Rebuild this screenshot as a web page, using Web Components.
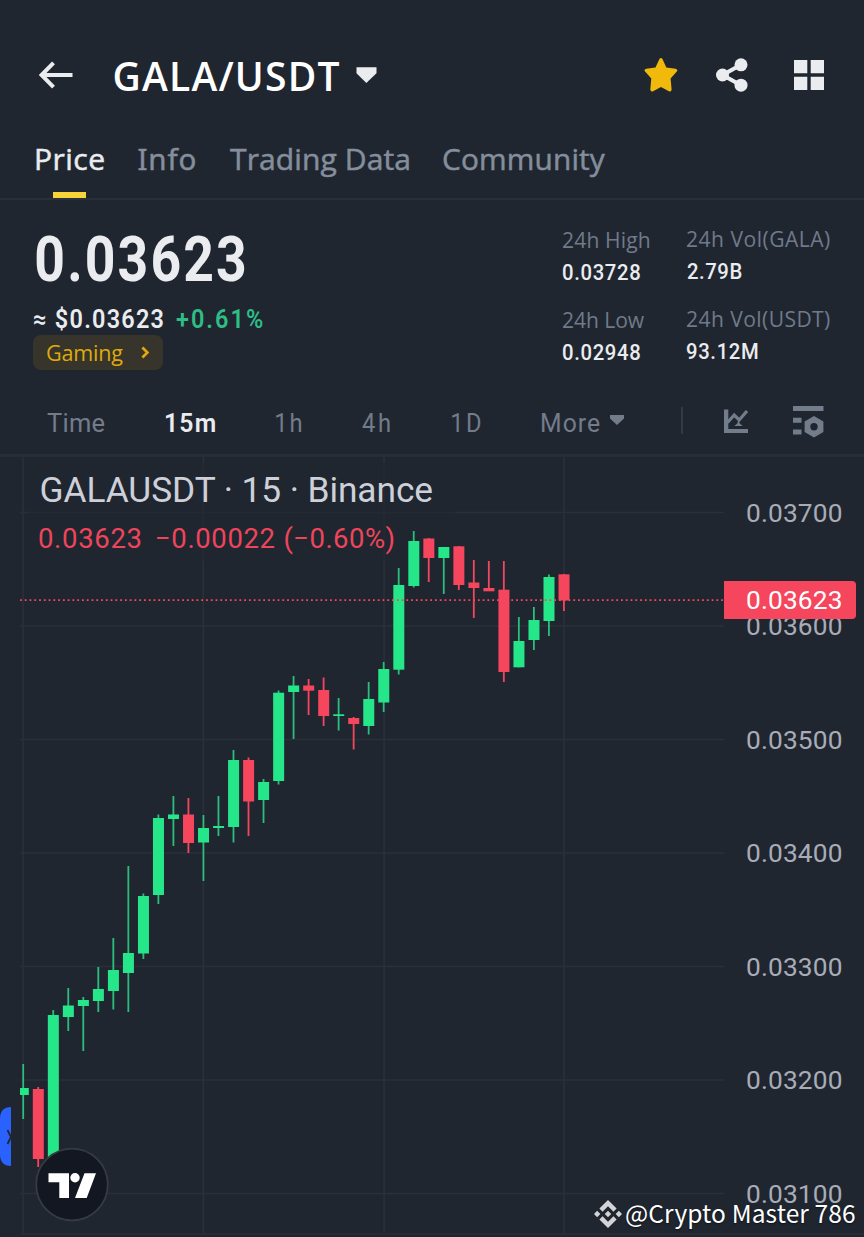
<!DOCTYPE html>
<html lang="en">
<head>
<meta charset="utf-8">
<title>GALA/USDT</title>
<style>
    body {
        margin: 0;
        background: #202630;
        color: #eaecef;
        font-family: Roboto, "Liberation Sans", sans-serif;
    }
</style>
</head>
<body>
<trade-page></trade-page>

<script>
const SANS = '"Open Sans", "Noto Sans", sans-serif';
const measure = document.createElement("canvas").getContext("2d");

// shared base: every element renders its own markup in an open shadow root
class BaseElement extends HTMLElement {
    constructor() {
        super();
        this.attachShadow({ mode: "open" });
    }

    connectedCallback() {
        const template = document.createElement("template");
        template.innerHTML = this.render();
        this.shadowRoot.replaceChildren(template.content.cloneNode(true));
    }
}

// a single line of text tracked to an exact ink width
class FitText extends HTMLElement {
    constructor() {
        super();
        this.attachShadow({ mode: "open" }).innerHTML = `
            <style>
                :host { display: block; flex: none; }
                span { display: block; width: max-content; white-space: pre; transform-origin: 0 50%; }
            </style>
            <span><slot></slot></span>
        `;
    }

    connectedCallback() {
        const width = Number(this.getAttribute("width"));
        const stretch = Number(this.getAttribute("stretch") || 1);
        const text = this.textContent;
        const style = getComputedStyle(this);
        measure.font = `${style.fontWeight} ${style.fontSize} ${style.fontFamily}`;
        const box = measure.measureText(text);
        const ink = box.actualBoundingBoxRight + box.actualBoundingBoxLeft;
        const spacing = (width / stretch - ink) / (text.length - 1);
        const span = this.shadowRoot.querySelector("span");
        this.style.width = `${width}px`;
        span.style.letterSpacing = `${spacing}px`;
        span.style.transform = `translateX(${box.actualBoundingBoxLeft * stretch}px) scaleX(${stretch})`;
    }
}
customElements.define("fit-text", FitText);

class PairHeader extends BaseElement {
    render() {
        return `
            <style>
                :host {
                    display: flex;
                    align-items: center;
                    height: 60px;
                    padding: 45px 40px 0 39px;
                    color: #eaecef;
                }
                svg { display: block; flex: none; fill: currentColor; }
                fit-text { margin: 2px 0 0 41.5px; color: #fff; font: 600 39px ${SANS}; line-height: 60px; }
                .caret { margin-left: 16.5px; }
                .actions { display: flex; align-items: center; margin-left: auto; }
                .star { color: #f0b90b; }
                .share { margin: 0 46px 0 38px; }
            </style>
            <svg width="34" height="28" viewBox="0 0 34 28">
                <path d="M14.5 1.8 2.6 14l11.9 12.2M3 14h30.5" fill="none" stroke="currentColor" stroke-width="4"/>
            </svg>
            <fit-text width="225" stretch="1">${this.getAttribute("pair")}</fit-text>
            <svg class="caret" width="21" height="16" viewBox="0 0 21 16"><path d="M.5.3h20v6L10.3 16 .5 6.3z"/></svg>
            <div class="actions">
                <svg class="star" width="34" height="34" viewBox="0 0 34 34">
                    <path d="M15.2 1.4q1.8-2.6 3.5 0l3.6 8 9.3 1.3q2.8.9 1.2 2.8l-6.2 7 1 11q-.3 2.8-2.7 1.8L17 28.9l-7.9 4.4q-2.6.8-2.8-1.8l1-11-6.2-7q-1.7-1.9 1.1-2.8l9.3-1.3z"/>
                </svg>
                <svg class="share" width="32" height="34" viewBox="0 0 32 34">
                    <path d="M25 6.8 6.5 17 25 27.2" fill="none" stroke="currentColor" stroke-width="4"/>
                    <circle cx="6.5" cy="17" r="6.5"/><circle cx="25" cy="6.8" r="6.5"/><circle cx="25" cy="27.2" r="6.5"/>
                </svg>
                <svg width="30" height="30" viewBox="0 0 30 30"><path d="M0 0h13.3v13.3H0zM16.7 0H30v13.3H16.7zM0 16.7h13.3V30H0zM16.7 16.7H30V30H16.7z"/></svg>
            </div>
        `;
    }
}
customElements.define("pair-header", PairHeader);

class PageTabs extends BaseElement {
    render() {
        return `
            <style>
                :host {
                    display: flex;
                    box-sizing: border-box;
                    height: 95px;
                    padding: 0 35.5px;
                    border-bottom: 2px solid #2a303a;
                    color: #848e9c;
                    font: 400 29.5px ${SANS};
                    -webkit-text-stroke: .5px;
                }
                .tab { display: flex; flex-direction: column; align-items: center; padding-top: 36px; margin-right: 34.5px; }
                fit-text { line-height: 36px; }
                .active { color: #eaecef; }
                .active::after { content: ""; width: 33px; height: 7px; margin-top: 15px; background: #f8d33a; }
                .info { font-family: "Noto Sans", sans-serif; }
            </style>
            <div class="tab active"><fit-text width="68.5" stretch="1.02">Price</fit-text></div>
            <div class="tab info"><fit-text width="57" stretch="1">Info</fit-text></div>
            <div class="tab"><fit-text width="178.5" stretch="1.02">Trading Data</fit-text></div>
            <div class="tab"><fit-text width="162" stretch="1.01">Community</fit-text></div>
        `;
    }
}
customElements.define("page-tabs", PageTabs);

class StatItem extends BaseElement {
    render() {
        const [labelWidth, valueWidth] = this.getAttribute("widths").split(" ");
        return `
            <style>
                :host { display: block; height: 80px; }
                .label { color: #707a8a; font: 400 21.5px ${SANS}; line-height: 30px; }
                .value { margin-top: 1.5px; color: #eaecef; font-size: 22.5px; font-weight: 500; line-height: 30px; }
            </style>
            <fit-text class="label" width="${labelWidth}" stretch=".98">${this.getAttribute("label")}</fit-text>
            <fit-text class="value" width="${valueWidth}" stretch=".9">${this.getAttribute("value")}</fit-text>
        `;
    }
}
customElements.define("stat-item", StatItem);

class PriceSummary extends BaseElement {
    render() {
        return `
            <style>
                :host { display: flex; height: 190px; padding-left: 33.5px; }
                .price { margin: 26px 0 0 2px; font-size: 63px; font-weight: 700; line-height: 68px; }
                .left { width: 529.5px; }
                .fiat { display: flex; gap: 12.5px; margin-top: 10px; font-size: 25.5px; font-weight: 600; line-height: 30px; }
                .up { color: #2ebd85; }
                .badge {
                    display: flex;
                    align-items: center;
                    box-sizing: border-box;
                    width: 130px;
                    height: 35px;
                    padding: 0 14px;
                    margin: 1px 0 0 -.5px;
                    border-radius: 8px;
                    background: #37342b;
                    color: #dfab0c;
                    font: 400 22px ${SANS};
                }
                .badge fit-text { line-height: 30px; margin-top: -2px; }
                .badge svg { margin-left: 17.5px; }
                .col { width: 124px; padding-top: 25px; flex: none; }
                .col + .col { padding-top: 24px; width: 145px; }
            </style>
            <div class="left">
                <fit-text class="price" width="209" stretch=".85">0.03623</fit-text>
                <div class="fiat">
                    <fit-text width="129.5" stretch=".92">≈ $0.03623</fit-text>
                    <fit-text class="up" width="86.5" stretch=".92">+0.61%</fit-text>
                </div>
                <div class="badge">
                    <fit-text width="76" stretch=".98">Gaming</fit-text>
                    <svg width="9" height="13" viewBox="0 0 9 13"><path d="m1.5 1.2 5.3 5.3-5.3 5.3" fill="none" stroke="currentColor" stroke-width="2.8"/></svg>
                </div>
            </div>
            <div class="col">
                <stat-item label="24h High" value="0.03728" widths="86.5 77"></stat-item>
                <stat-item label="24h Low" value="0.02948" widths="81.5 77"></stat-item>
            </div>
            <div class="col">
                <stat-item label="24h Vol(GALA)" value="2.79B" widths="143 55"></stat-item>
                <stat-item label="24h Vol(USDT)" value="93.12M" widths="143 71"></stat-item>
            </div>
        `;
    }
}
customElements.define("price-summary", PriceSummary);

class IntervalBar extends BaseElement {
    render() {
        return `
            <style>
                :host {
                    display: flex;
                    align-items: center;
                    box-sizing: border-box;
                    height: 67px;
                    padding-left: 47px;
                    border-bottom: 3px solid #272d37;
                    color: #737c8b;
                    font-size: 25.5px;
                }
                fit-text { line-height: 32px; margin-top: 1px; }
                svg { display: block; flex: none; fill: currentColor; }
                .active { margin: 1px 61px 0; color: #eaecef; font-weight: 600; }
                .divider { width: 2px; height: 27px; margin: -4px 41px 0 57px; background: #343a45; }
            </style>
            <fit-text width="57.5">Time</fit-text>
            <fit-text class="active" width="49" stretch=".97">15m</fit-text>
            <fit-text width="25.5" stretch=".93">1h</fit-text>
            <fit-text width="28" stretch=".93" style="margin-left: 60.5px">4h</fit-text>
            <fit-text width="29" stretch=".93" style="margin-left: 62px">1D</fit-text>
            <fit-text width="57.5" stretch=".97" style="margin-left: 61px">More</fit-text>
            <svg width="14" height="10" viewBox="0 0 14 10" style="margin: -5px 0 0 10.5px"><path d="M0 0h14v3.5L7 10 0 3.5z"/></svg>
            <div class="divider"></div>
            <svg width="24" height="24" viewBox="0 0 24 24" style="margin-top: -3px">
                <path d="M0 .5h4.3V20H24v4H0z"/>
                <path d="m3.5 13.5 6.7-7.5 5 5L23 2" fill="none" stroke="currentColor" stroke-width="3.2"/>
                <path d="m14.5 10.5 1.2 4 3 2.5h-8.4l3-2.5z"/>
            </svg>
            <svg width="31" height="32" viewBox="0 0 31 32" style="margin-left: 45.5px">
                <path d="M0 0h30.5v5H0zM0 11.8h8.5v5H0zM0 23.5h8.5v5H0z"/>
                <path fill-rule="evenodd" d="m21 10 9.4 5.4v10.7L21 31.4l-9.4-5.3V15.4zm0 7a3.7 3.7 0 1 0 0 7.4 3.7 3.7 0 0 0 0-7.4z"/>
            </svg>
        `;
    }
}
customElements.define("interval-bar", IntervalBar);

// [high, body top, body bottom, low, falling]
const candles = [
    [1064, 1088, 1095, 1119], [1087, 1089, 1159, 1167, 1], [1010, 1015, 1160, 1162],
    [988, 1005.5, 1017, 1031], [997, 1000, 1006, 1051], [967, 989, 1001, 1012],
    [938, 970, 991, 1009.5], [866, 953, 973, 1012], [893.5, 896, 953.5, 959],
    [814.5, 818, 895, 904], [796, 814.5, 819, 846], [798, 814.5, 843, 853, 1],
    [815, 828, 842.5, 881], [796, 826, 828, 836], [750, 760, 827, 842.5],
    [757.5, 760, 801.5, 836, 1], [779, 782, 800, 823], [690.5, 692.7, 781, 784.5],
    [676, 685.5, 692, 739], [679, 685.5, 690.7, 715, 1], [677.5, 690, 716, 726, 1],
    [698, 714.3, 716, 730.5], [717, 718, 724, 749.5, 1], [682, 699, 726, 734.5],
    [662, 669, 702.5, 712], [568, 585, 669.7, 674.5], [531, 541, 586, 587.5],
    [538, 538.5, 558, 582, 1], [547, 547, 558, 594], [546, 546.3, 585, 590, 1],
    [560, 582.5, 588, 618, 1], [561, 588, 591.3, 591, 1], [561, 589.7, 672, 682, 1],
    [617, 641, 667.3, 667.3], [607, 620, 640, 650], [574.5, 577, 621, 636],
    [574, 574.3, 600.5, 611, 1],
];
const levels = ["0.03700", "0.03600", "0.03500", "0.03400", "0.03300", "0.03200", "0.03100"];

class PriceChart extends BaseElement {
    render() {
        const rows = levels.map((level, i) => {
            const y = 512.5 + i * 113.5;
            return `<path class="grid" d="M20 ${y}H724"/>
                <text x="746" y="${y + 9.2}" textLength="96.5">${level}</text>`;
        }).join("");
        const cols = [23, 203.3, 384, 564].map(x => `<path class="grid" d="M${x} 454V1233"/>`).join("");
        const bars = candles.map(([high, top, bottom, low, falling], i) => {
            const x = 23.2 + i * 15.02;
            return `<g class="${falling ? "down" : "up"}">
                <rect class="wick" x="${x - .9}" y="${high}" width="1.8" height="${low - high}"/>
                <rect x="${x - 5.4}" y="${top}" width="11" height="${bottom - top}"/>
            </g>`;
        }).join("");
        return `
            <style>
                :host { display: block; position: relative; height: 780px; }
                svg { display: block; }
                text { fill: #a9acb7; font-size: 26.3px; }
                .grid { stroke: #2a303a; stroke-width: 1.7; }
                .up { fill: #26e68a; }
                .up .wick { fill: #2bbd7c; }
                .down { fill: #f6465d; }
                .legend { position: absolute; top: 12px; left: 29px; }
                .symbol { margin-left: 12.5px; color: #cdd0d9; font-size: 35.3px; line-height: 42px; }
                .change { display: flex; padding: 14px 0 0 10px; color: #ee455b; font-size: 27.5px; line-height: 28px; }
            </style>
            <svg width="864" height="780" viewBox="0 457 864 780">
                ${cols}
                ${rows}
                <path class="grid" d="M20 1234H864"/>
                <path d="M29 463h426v98H29z" fill="#202630" opacity=".6"/>
                <clipPath id="pane"><path d="M20 457h704v776H20z"/></clipPath>
                <g clip-path="url(#pane)">${bars}</g>
                <path d="M20 600.2H724" stroke="#f6465d" stroke-width="1.7" stroke-dasharray="1.8 2.97"/>
                <path d="M724 581h128q4 0 4 4v30q0 4-4 4H724z" fill="#f6465d"/>
                <text x="746" y="609.2" textLength="96.5" style="fill: #fff">0.03623</text>
                <path d="M11 1107v59q-11 0-11-12v-35q0-12 11-12z" fill="#2962ff"/>
                <path d="m7.5 1130 3.5 7-3.5 7" fill="none" stroke="#202630" stroke-width="1.8"/>
                <circle cx="72" cy="1184.5" r="35.8" fill="#131722" stroke="#363a45" stroke-width="1.8"/>
                <path d="M48.5 1173.3H69V1198h-9.7v-15.8H48.5zM84.5 1173.3H96l-9.3 24.7H75z" fill="#fff"/>
                <circle cx="75" cy="1177.7" r="4.7" fill="#fff"/>
            </svg>
            <div class="legend">
                <fit-text class="symbol" width="391.5">GALAUSDT · 15 · Binance</fit-text>
                <div class="change">
                    <fit-text width="101.5">0.03623</fit-text>
                    <fit-text width="117.5" style="margin-left: 16.5px">−0.00022</fit-text>
                    <fit-text width="109" style="margin-left: 10px">(−0.60%)</fit-text>
                </div>
            </div>
            <slot></slot>
        `;
    }
}
customElements.define("price-chart", PriceChart);

class AuthorMark extends BaseElement {
    render() {
        return `
            <style>
                :host {
                    display: flex;
                    align-items: center;
                    gap: 4px;
                    position: absolute;
                    right: 9px;
                    bottom: 6px;
                    color: #fff;
                    font: 400 24.5px "Noto Sans CJK SC", "Noto Sans", sans-serif;
                }
                fit-text { line-height: 36px; margin-top: -1px; text-shadow: 0 1px 2px rgba(0, 0, 0, .6); }
            </style>
            <svg width="28" height="28" viewBox="0 0 126.61 126.61" fill="#d4d4d6">
                <path d="m38.73 53.2 24.59-24.58 24.6 24.6 14.3-14.31L63.32 0 24.43 38.89zM0 63.31 14.3 49l14.31 14.31-14.31 14.3zM38.73 73.41 63.32 98l24.6-24.6 14.31 14.29-38.9 38.91-38.91-38.88zM98 63.31 112.3 49l14.31 14.3-14.31 14.32zM77.83 63.3 63.32 48.78 48.81 63.28l14.51 14.5z"/>
            </svg>
            <fit-text width="229">${this.getAttribute("name")}</fit-text>
        `;
    }
}
customElements.define("author-mark", AuthorMark);

class TradePage extends BaseElement {
    render() {
        return `
            <style>
                :host { display: block; width: 864px; height: 1237px; overflow: hidden; }
            </style>
            <pair-header pair="GALA/USDT"></pair-header>
            <page-tabs></page-tabs>
            <price-summary></price-summary>
            <interval-bar></interval-bar>
            <price-chart>
                <author-mark name="@Crypto Master 786"></author-mark>
            </price-chart>
        `;
    }
}
customElements.define("trade-page", TradePage);
</script>
</body>
</html>
